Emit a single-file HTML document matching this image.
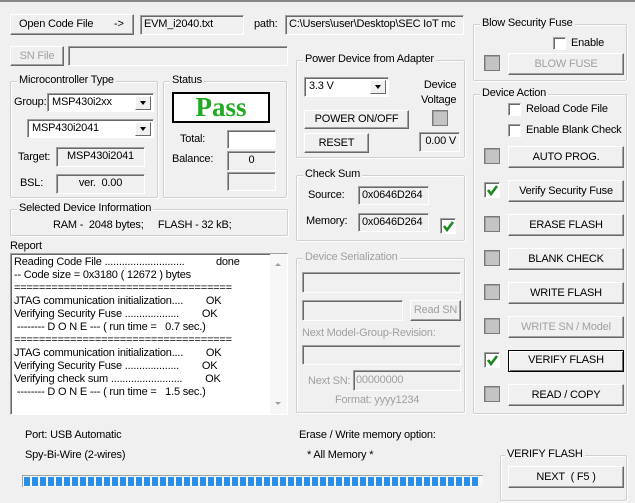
<!DOCTYPE html>
<html><head><meta charset="utf-8"><style>
*{box-sizing:border-box;margin:0;padding:0}
body{width:635px;height:503px;background:#f0f0f0;font-family:"Liberation Sans",sans-serif;font-size:11px;color:#000;position:relative;overflow:hidden;letter-spacing:-0.2px}
.a{position:absolute;white-space:nowrap}
.btn{position:absolute;background:#f0f0f0;border:1px solid;border-color:#fff #696969 #696969 #fff;box-shadow:inset -1px -1px #a0a0a0;text-align:center;white-space:nowrap}
.dis{color:#a0a0a0}
.fld{position:absolute;border:1px solid;border-color:#a0a0a0 #fff #fff #a0a0a0;box-shadow:inset 1px 1px #696969;white-space:nowrap;overflow:hidden;padding-left:3px}
.w{background:#fff}
.grp{position:absolute;border:1px solid #d0d0d0;box-shadow:inset 1px 1px #fff,1px 1px #fff;border-radius:2px}
.grp>.t{position:absolute;top:-8px;left:6px;background:#f0f0f0;padding:0 2px;white-space:nowrap}
.ind{position:absolute;width:16px;height:16px;background:#c4c4c4;border:1px solid #7a7a7a;box-shadow:inset 1px 1px #a0a0a0}
.ck{position:absolute;width:13px;height:13px;background:#fff;border:1px solid;border-color:#a0a0a0 #fff #fff #a0a0a0;box-shadow:inset 1px 1px #696969}
.tick{background:#fff}
.tick svg{position:absolute;left:1px;top:1px}
.cb{position:absolute;background:#fff;border:1px solid;border-color:#a0a0a0 #fff #fff #a0a0a0;box-shadow:inset 1px 1px #696969;padding:2px 0 0 4px}
.cb .ar{position:absolute;right:2px;top:2px;width:16px;height:14px;background:#f0f0f0;border:1px solid;border-color:#fff #696969 #696969 #fff}
.cb .ar:after{content:"";position:absolute;left:4px;top:4px;border:3.5px solid transparent;border-top:4px solid #000}
</style></head><body>
<div class="a" style="left:0;top:0;width:635px;height:2px;background:#888"></div>

<div class="btn" style="left:10px;top:14px;width:124px;height:21px;line-height:19px;text-align:left;padding-left:8px">Open Code File<span style="position:absolute;left:103px">-&gt;</span></div>
<div class="fld" style="left:140px;top:15px;width:104px;height:20px;line-height:17px">EVM_i2040.txt</div>
<div class="a" style="left:254px;top:18px">path:</div>
<div class="fld" style="left:285px;top:15px;width:179px;height:20px;line-height:17px">C:\Users\user\Desktop\SEC IoT mc</div>

<div class="btn dis" style="left:10px;top:46px;width:54px;height:20px;line-height:18px">SN File</div>
<div class="fld" style="left:68px;top:46px;width:220px;height:20px"></div>

<div class="grp" style="left:10px;top:81px;width:148px;height:117px"><span class="t">Microcontroller Type</span></div>
<div class="a" style="left:14px;top:96px">Group:</div>
<div class="cb" style="left:47px;top:93px;width:107px;height:19px">MSP430i2xx<div class="ar"></div></div>
<div class="cb" style="left:27px;top:119px;width:127px;height:19px">MSP430i2041<div class="ar"></div></div>
<div class="a" style="left:18px;top:151px">Target:</div>
<div class="fld" style="left:56px;top:147px;width:89px;height:20px;line-height:17px;text-align:center;padding:0">MSP430i2041</div>
<div class="a" style="left:20px;top:177px">BSL:</div>
<div class="fld" style="left:56px;top:174px;width:89px;height:20px;line-height:17px;text-align:center;padding:0">ver.&nbsp; 0.00</div>

<div class="grp" style="left:163px;top:81px;width:124px;height:117px"><span class="t">Status</span></div>
<div class="a" style="left:172px;top:92px;width:98px;height:31px;border:2px solid #000;background:#fff;text-align:center;font-family:'Liberation Serif',serif;font-weight:bold;font-size:27px;line-height:27px;color:#22aa22;letter-spacing:0">Pass</div>
<div class="a" style="left:180px;top:133px">Total:</div>
<div class="fld w" style="left:227px;top:130px;width:49px;height:19px"></div>
<div class="a" style="left:172px;top:153px">Balance:</div>
<div class="fld" style="left:227px;top:151px;width:49px;height:20px;line-height:17px;text-align:center;padding:0">0</div>
<div class="fld" style="left:227px;top:172px;width:49px;height:19px"></div>

<div class="grp" style="left:10px;top:209px;width:278px;height:27px"><span class="t">Selected Device Information</span></div>
<div class="a" style="left:53px;top:219px">RAM -&nbsp; 2048 bytes;&nbsp;&nbsp;&nbsp;&nbsp; FLASH - 32 kB;</div>

<div class="a" style="left:10px;top:240px">Report</div>
<div class="fld w" style="left:10px;top:253px;width:278px;height:162px;padding:2px 0 0 3px;line-height:13px">Reading Code File ............................&nbsp;&nbsp;&nbsp;&nbsp;&nbsp;&nbsp;&nbsp;&nbsp;&nbsp;&nbsp;&nbsp;done<br>-- Code size = 0x3180 ( 12672 ) bytes<br>===================================<br>JTAG communication initialization....&nbsp;&nbsp;&nbsp;&nbsp;&nbsp;&nbsp;&nbsp;&nbsp;OK<br>Verifying Security Fuse ...................&nbsp;&nbsp;&nbsp;&nbsp;&nbsp;&nbsp;&nbsp;&nbsp;OK<br>&nbsp;-------- D O N E --- ( run time =&nbsp;&nbsp; 0.7 sec.)<br>===================================<br>JTAG communication initialization....&nbsp;&nbsp;&nbsp;&nbsp;&nbsp;&nbsp;&nbsp;&nbsp;OK<br>Verifying Security Fuse ...................&nbsp;&nbsp;&nbsp;&nbsp;&nbsp;&nbsp;&nbsp;&nbsp;OK<br>Verifying check sum .........................&nbsp;&nbsp;&nbsp;&nbsp;&nbsp;&nbsp;&nbsp;&nbsp;OK<br>&nbsp;-------- D O N E --- ( run time =&nbsp;&nbsp; 1.5 sec.)
<div style="position:absolute;right:0;top:0;width:17px;height:100%;background:#f7f7f7"><div style="position:absolute;left:5px;top:6px;border:3px solid transparent;border-bottom:3px solid #a0a0a0"></div><div style="position:absolute;left:5px;bottom:6px;border:3px solid transparent;border-top:3px solid #a0a0a0"></div></div></div>

<div class="a" style="left:25px;top:429px">Port: USB Automatic</div>
<div class="a" style="left:25px;top:449px">Spy-Bi-Wire (2-wires)</div>
<div class="a" style="left:22px;top:475px;width:461px;height:12px;border-top:1px solid #a0a0a0;border-left:1px solid #a0a0a0;background:#f7f7f7"></div>
<div class="a" style="left:24px;top:477px;width:456px;height:9px;background:repeating-linear-gradient(90deg,#2a8fe8 0 6px,transparent 6px 8px)"></div>

<div class="grp" style="left:296px;top:60px;width:169px;height:98px"><span class="t">Power Device from Adapter</span></div>
<div class="cb" style="left:304px;top:77px;width:85px;height:20px">3.3 V<div class="ar"></div></div>
<div class="a" style="left:421px;top:78px;text-align:center;line-height:15px">&nbsp;Device<br>Voltage</div>
<div class="ind" style="left:432px;top:110px"></div>
<div class="btn" style="left:304px;top:110px;width:105px;height:19px;line-height:17px">POWER ON/OFF</div>
<div class="btn" style="left:304px;top:133px;width:65px;height:20px;line-height:18px">RESET</div>
<div class="fld" style="left:419px;top:132px;width:41px;height:20px;line-height:17px;text-align:right;padding:0 3px 0 0">0.00 V</div>

<div class="grp" style="left:296px;top:175px;width:169px;height:66px"><span class="t">Check Sum</span></div>
<div class="a" style="left:308px;top:189px">Source:</div>
<div class="fld" style="left:358px;top:186px;width:71px;height:19px;line-height:16px">0x0646D264</div>
<div class="a" style="left:306px;top:215px">Memory:</div>
<div class="fld" style="left:358px;top:213px;width:71px;height:19px;line-height:16px">0x0646D264</div>
<div class="ck tick" style="left:440px;top:218px;width:16px;height:16px"><svg width="13" height="13" viewBox="0 0 13 13"><path d="M2 6 L5 10 L11 2" stroke="#1a8a1a" stroke-width="2.6" fill="none"/></svg></div>

<div class="grp" style="left:296px;top:258px;width:169px;height:155px"><span class="t dis">Device Serialization</span></div>
<div class="fld" style="left:302px;top:272px;width:159px;height:21px"></div>
<div class="fld" style="left:302px;top:300px;width:101px;height:21px"></div>
<div class="btn dis" style="left:410px;top:300px;width:51px;height:21px;line-height:19px">Read SN</div>
<div class="a dis" style="left:302px;top:327px">Next Model-Group-Revision:</div>
<div class="fld" style="left:302px;top:345px;width:159px;height:20px"></div>
<div class="a dis" style="left:308px;top:375px">Next SN:</div>
<div class="fld dis" style="left:353px;top:370px;width:108px;height:21px;line-height:18px;padding-left:2px">00000000</div>
<div class="a dis" style="left:335px;top:394px">Format: yyyy1234</div>

<div class="a" style="left:299px;top:429px">Erase / Write memory option:</div>
<div class="a" style="left:307px;top:449px">* All Memory *</div>

<div class="grp" style="left:473px;top:24px;width:154px;height:57px"><span class="t">Blow Security Fuse</span></div>
<div class="ck" style="left:553px;top:37px"></div>
<div class="a" style="left:571px;top:37px">Enable</div>
<div class="ind" style="left:484px;top:55px"></div>
<div class="btn dis" style="left:508px;top:53px;width:116px;height:22px;line-height:20px">BLOW FUSE</div>

<div class="grp" style="left:473px;top:94px;width:154px;height:320px"><span class="t">Device Action</span></div>
<div class="ck" style="left:508px;top:103px"></div><div class="a" style="left:526px;top:103px">Reload Code File</div>
<div class="ck" style="left:508px;top:124px"></div><div class="a" style="left:526px;top:124px">Enable Blank Check</div>

<div class="ind" style="left:484px;top:148px"></div>
<div class="btn" style="left:508px;top:146px;width:116px;height:22px;line-height:20px">AUTO PROG.</div>
<div class="ck tick" style="left:484px;top:182px;width:16px;height:16px"><svg width="13" height="13" viewBox="0 0 13 13"><path d="M2 6 L5 10 L11 2" stroke="#1a8a1a" stroke-width="2.6" fill="none"/></svg></div>
<div class="btn" style="left:508px;top:180px;width:116px;height:22px;line-height:20px">Verify Security Fuse</div>
<div class="ind" style="left:484px;top:216px"></div>
<div class="btn" style="left:508px;top:214px;width:116px;height:22px;line-height:20px">ERASE FLASH</div>
<div class="ind" style="left:484px;top:250px"></div>
<div class="btn" style="left:508px;top:248px;width:116px;height:22px;line-height:20px">BLANK CHECK</div>
<div class="ind" style="left:484px;top:284px"></div>
<div class="btn" style="left:508px;top:282px;width:116px;height:22px;line-height:20px">WRITE FLASH</div>
<div class="ind" style="left:484px;top:318px"></div>
<div class="btn dis" style="left:508px;top:316px;width:116px;height:22px;line-height:20px">WRITE SN / Model</div>
<div class="ck tick" style="left:484px;top:352px;width:16px;height:16px"><svg width="13" height="13" viewBox="0 0 13 13"><path d="M2 6 L5 10 L11 2" stroke="#1a8a1a" stroke-width="2.6" fill="none"/></svg></div>
<div class="btn" style="left:508px;top:350px;width:116px;height:22px;line-height:18px;border:1px solid #000;box-shadow:inset 1px 1px #fff,inset -1px -1px #696969">VERIFY FLASH</div>
<div class="ind" style="left:484px;top:386px"></div>
<div class="btn" style="left:508px;top:384px;width:116px;height:22px;line-height:20px">READ / COPY</div>

<div class="grp" style="left:500px;top:455px;width:127px;height:46px"><span class="t" style="left:4px">VERIFY FLASH</span></div>
<div class="btn" style="left:508px;top:466px;width:116px;height:22px;line-height:20px">NEXT&nbsp; ( F5 )</div>
</body></html>
